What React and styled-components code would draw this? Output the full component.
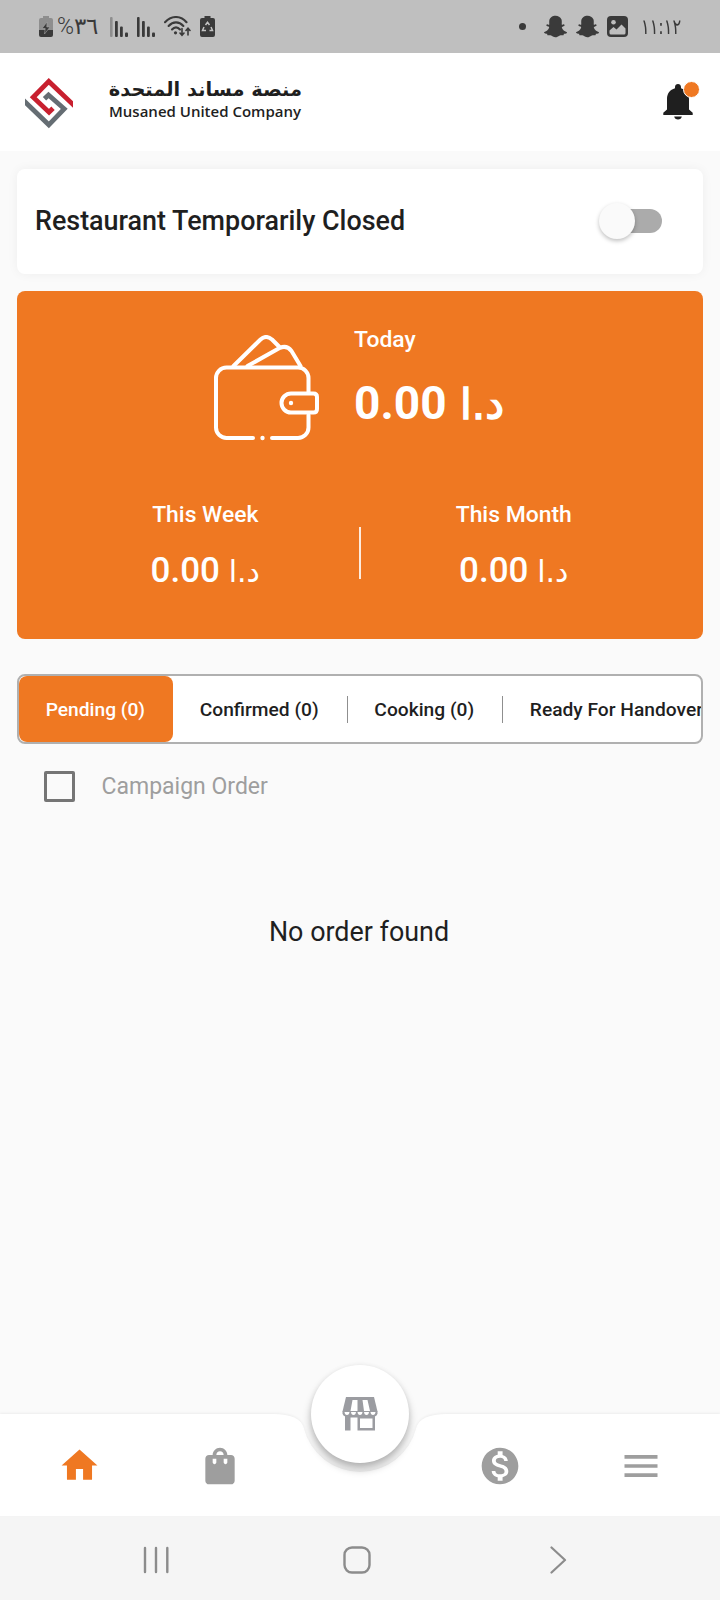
import React from 'react'
import styled, { createGlobalStyle } from 'styled-components'
import { MdHome, MdShoppingBag, MdMonetizationOn, MdMenu } from 'react-icons/md'
import { FaSnapchatGhost } from 'react-icons/fa'

const tabs = [
    { id: 1, label: 'Pending (0)', active: true },
    { id: 2, label: 'Confirmed (0)' },
    { id: 3, label: 'Cooking (0)', divider: true },
    { id: 4, label: 'Ready For Handover', divider: true },
]

const BatteryCharging = () => (
    <svg width="14" height="21" viewBox="0 0 14 21">
        <path d="M4 0h6v2h2a2 2 0 0 1 2 2v10H0V4a2 2 0 0 1 2-2h2z" fill="#8e8e8e" />
        <path d="M0 14h14v5a2 2 0 0 1-2 2H2a2 2 0 0 1-2-2z" fill="#3a3a3a" />
        <path d="M8 6L3 12.5h3.2L5.5 18l5.5-7H7.8z" fill="#3a3a3a" stroke="#a5a5a5" strokeWidth=".6" />
    </svg>
)

const Signal = ({ faded }) => (
    <svg width="18" height="20" viewBox="0 0 18 20" fill="#3a3a3a">
        <rect x="0" y="0" width="2.6" height="20" rx="1" fill={faded ? '#8e8e8e' : '#3a3a3a'} />
        <rect x="5" y="4" width="2.8" height="16" rx="1" />
        <rect x="10" y="9.5" width="2.8" height="10.5" rx="1" />
        <rect x="15" y="15.5" width="3" height="4.5" rx="1" />
    </svg>
)

const Wifi = () => (
    <svg width="27" height="21" viewBox="0 0 27 21" fill="none" stroke="#3a3a3a" strokeWidth="2.1" strokeLinecap="round">
        <path d="M1 6.2C7.5-.7 16.5-.7 22.5 6.2" />
        <path d="M4.6 10C9 5.2 15 5.2 19.4 10" />
        <path d="M8 13.5C10.5 10.6 13.5 10.6 16 13.5" />
        <circle cx="11.5" cy="16.8" r="1.6" fill="#3a3a3a" stroke="none" />
        <path d="M18 12.5v6.500M16 17l2 2.300 2-2.300M24 19v-6.500M22 14.500l2-2.300 2 2.300" strokeWidth="1.6" />
    </svg>
)

const BatteryRecycle = () => (
    <svg width="15" height="21" viewBox="0 0 15 21">
        <path d="M4.5 0h6v2H13a2 2 0 0 1 2 2v15a2 2 0 0 1-2 2H2a2 2 0 0 1-2-2V4a2 2 0 0 1 2-2h2.5z" fill="#3a3a3a" />
        <path d="M5.5 9l2-2.8 2 2.8M11 11l1.5 3.5h-3M6 14.5H2.5L4 11" fill="none" stroke="#c4c4c4" strokeWidth="1.5" />
    </svg>
)

const Picture = () => (
    <svg width="21" height="21" viewBox="0 0 21 21">
        <rect width="21" height="21" rx="4" fill="#3a3a3a" />
        <circle cx="6.5" cy="6.3" r="2.3" fill="#bfbfbf" />
        <path d="M2.5 14.5l4-3.5 3 2.5 5-5 4 4V17a1.5 1.5 0 0 1-1.5 1.5H4A1.5 1.5 0 0 1 2.5 17z" fill="#bfbfbf" />
    </svg>
)

const Logo = () => (
    <svg width="48" height="51" viewBox="0 0 48 51" fill="none" strokeWidth="4.8">
        <path d="M52 30.3L23.8 3.4 8.2 19.2 24 34.2 28 30.2" stroke="#c8202f" />
        <path d="M-4 20L23.8 46.8 39.2 30.8 23.5 17 19.5 20.8" stroke="#656d73" />
    </svg>
)

const Bell = () => (
    <svg width="30" height="36" viewBox="0 0 30 36" fill="#1f1f1f">
        <path d="M15 0c1.700 0 3 1.300 3 3v1.300C23 5.700 26 9.500 26 15v10.500l3.700 3.300V31H.3v-2.200L4 25.500V15C4 9.500 7 5.700 12 4.300V3c0-1.700 1.300-3 3-3z" />
        <path d="M11.200 32.500h7.600c-.3 1.900-1.800 3-3.800 3s-3.500-1.100-3.800-3z" />
    </svg>
)

const Wallet = () => (
    <svg width="106" height="106" viewBox="0 0 106 106" fill="none" stroke="#fff" strokeWidth="4" strokeLinecap="round" strokeLinejoin="round">
        <path d="M39 103H12.500A10.500 10.500 0 0 1 2 92.500V43A10.500 10.500 0 0 1 12.500 32.500H84a10.500 10.500 0 0 1 10.500 10.500V58M94.500 80V92.500A10.500 10.500 0 0 1 84 103H58" />
        <path d="M19.500 31L46.500 4.500Q52-.5 58 4.500L65.500 12" />
        <path d="M33.500 31L66 12.800Q73 10 77.500 16L86.500 31" />
        <path d="M77 58.500h22.500q3.500 0 3.500 3.500v12q0 3.500-3.500 3.500H77a9.500 9.500 0 0 1 0-19z" />
        <circle cx="77" cy="68" r="2.2" fill="#fff" stroke="none" />
        <circle cx="48.5" cy="103" r="2.2" fill="#fff" stroke="none" />
    </svg>
)

const Store = () => (
    <svg width="36" height="34" viewBox="0 0 36 34" fill="#9b9ca1">
        <path d="M4 0h28l3.500 14.500H.5z" />
        <path d="M10.500 3h5v11h-7zM20.500 3h5l2.500 11h-6z" fill="#fff" />
        <path d="M.5 14h35v2.500c-.5 2-1.700 3-3.500 3H4c-1.800 0-3-1-3.500-3z" />
        <path d="M2.500 15h5q-.3 3-2.500 3t-2.500-3zM9 15h5q-.3 3-2.500 3T9 15zM15.500 15h5q-.3 3-2.500 3t-2.500-3zM22 15h5q-.3 3-2.500 3T22 15zM28.500 15h5q-.3 3-2.500 3t-2.500-3z" fill="#fff" />
        <path d="M3 18h5.500v15.500H3zM3 18h30v2.500H3z" />
        <path d="M15.500 19H33v14.500H15.500zM18 21.500v9.500h12.500v-9.500z" fillRule="evenodd" />
    </svg>
)

const App = () => {
    return (
        <>
            <GlobalStyle />
            <Screen>
                <StatusBar>
                    <StatusGroup>
                        <BatteryCharging />
                        <Percent>%٣٦</Percent>
                        <Signal faded />
                        <Signal />
                        <Wifi />
                        <BatteryRecycle />
                    </StatusGroup>
                    <StatusGroup $end>
                        <MoreDot />
                        <FaSnapchatGhost size={23} />
                        <FaSnapchatGhost size={23} />
                        <Picture />
                        <Clock>١١:١٢</Clock>
                    </StatusGroup>
                </StatusBar>

                <Header>
                    <Logo />
                    <Brand>
                        <ArabicName lang="ar" dir="rtl">منصة مساند المتحدة</ArabicName>
                        <LatinName>Musaned United Company</LatinName>
                    </Brand>
                    <BellButton aria-label="Notifications">
                        <Bell />
                        <BellBadge />
                    </BellButton>
                </Header>

                <Content>
                    <ClosedCard>
                        <CardTitle>Restaurant Temporarily Closed</CardTitle>
                        <Switch role="switch" aria-checked="false">
                            <Thumb />
                        </Switch>
                    </ClosedCard>

                    <Earnings>
                        <TodayRow>
                            <Wallet />
                            <div>
                                <EarningLabel>Today</EarningLabel>
                                <Amount $big>0.00 <Currency $big>د.ا</Currency></Amount>
                            </div>
                        </TodayRow>
                        <PeriodRow>
                            <Period>
                                <EarningLabel>This Week</EarningLabel>
                                <Amount>0.00 <Currency>د.ا</Currency></Amount>
                            </Period>
                            <PeriodDivider />
                            <Period>
                                <EarningLabel>This Month</EarningLabel>
                                <Amount>0.00 <Currency>د.ا</Currency></Amount>
                            </Period>
                        </PeriodRow>
                    </Earnings>

                    <Tabs>
                        {
                            tabs.map((tab) => (
                                <React.Fragment key={tab.id}>
                                    {tab.divider && <TabDivider />}
                                    <Tab $active={tab.active}>{tab.label}</Tab>
                                </React.Fragment>
                            ))
                        }
                    </Tabs>

                    <Campaign>
                        <Checkbox />
                        Campaign Order
                    </Campaign>
                    <Empty>No order found</Empty>
                </Content>

                <BottomBar>
                    <BarShape width="720" height="102" viewBox="0 0 720 102">
                        <path d="M0 0H272.7Q300.2 0 303.75 14.1A58 58 0 0 0 416.25 14.1Q419.8 0 447.3 0H720V102H0z" fill="#fff" />
                    </BarShape>
                    <BarItem $active><MdHome size={43} /></BarItem>
                    <BarItem><MdShoppingBag size={44} /></BarItem>
                    <BarItem><StoreButton><Store /></StoreButton></BarItem>
                    <BarItem><MdMonetizationOn size={44} /></BarItem>
                    <BarItem><MdMenu size={44} /></BarItem>
                </BottomBar>

                <SystemNav>
                    <svg width="28" height="28" viewBox="0 0 28 28" fill="none" stroke="#8c8c8c" strokeWidth="2.4" strokeLinecap="round">
                        <path d="M3 2v24M14 2v24M25.3 2v24" />
                    </svg>
                    <svg width="28" height="28" viewBox="0 0 28 28" fill="none" stroke="#8c8c8c" strokeWidth="2.4">
                        <rect x="1.5" y="1.5" width="25" height="25" rx="7.5" />
                    </svg>
                    <svg width="28" height="28" viewBox="0 0 28 28" fill="none" stroke="#8c8c8c" strokeWidth="2.2" strokeLinecap="round" strokeLinejoin="round">
                        <path d="M7.500 1.500L21 14 7.500 26.500" />
                    </svg>
                </SystemNav>
            </Screen>
        </>
    )
}

const GlobalStyle = createGlobalStyle`
    *{
        box-sizing: border-box;
    }
    body{
        margin: 0;
        background: #fafafa;
        font-family: Roboto, 'DejaVu Sans', sans-serif;
        color: #1f1f1f;
    }
    button{
        border: 0;
        padding: 0;
        background: none;
        font: inherit;
        color: inherit;
    }
    svg{
        display: block;
        flex-shrink: 0;
    }
`

const Screen = styled.div`
    width: 720px;
    height: 1600px;
    display: flex;
    flex-direction: column;
    overflow: hidden;
    background: #fafafa;
`

const StatusBar = styled.div`
    height: 53px;
    padding: 0 40.5px 0 39px;
    display: flex;
    align-items: center;
    justify-content: space-between;
    background: #bfbfbf;
    color: #3a3a3a;
`

const StatusGroup = styled.div`
    display: flex;
    align-items: center;
    gap: ${({ $end }) => ($end ? '8.5px' : '9px')};
`

const Percent = styled.span`
    width: 43px;
    margin: 0 1px 0 -5px;
    font-size: 23px;
    font-weight: 300;
    direction: ltr;
    unicode-bidi: bidi-override;
    white-space: nowrap;
`

const Clock = styled.span`
    width: 39px;
    margin-left: 4px;
    font-family: 'DejaVu Sans', sans-serif;
    font-size: 21px;
    letter-spacing: -2px;
    white-space: nowrap;
    transform: scaleX(.77);
    transform-origin: left;
`

const MoreDot = styled.span`
    width: 7px;
    height: 7px;
    margin-right: 10px;
    border-radius: 50%;
    background: #3a3a3a;
`

const Header = styled.header`
    height: 98px;
    padding: 3px 27px 0 25px;
    display: flex;
    align-items: center;
    background: #fff;
`

const Brand = styled.div`
    margin: -8px 0 0 36px;
    flex: 1;
`

const ArabicName = styled.div`
    width: 193px;
    height: 23px;
    font: bold 19.4px/24px 'DejaVu Sans', sans-serif;
    white-space: nowrap;
`

const LatinName = styled.div`
    font: 600 15px/20px 'Open Sans', sans-serif;
    white-space: nowrap;
`

const BellButton = styled.button`
    position: relative;
    margin-top: -3px;
`

const BellBadge = styled.span`
    position: absolute;
    top: -3px;
    right: -7px;
    width: 17px;
    height: 17px;
    border: 1.5px solid #fff;
    border-radius: 50%;
    background: #ef7822;
`

const Content = styled.main`
    flex: 1;
    padding: 18px 17px 0;
`

const ClosedCard = styled.section`
    height: 105px;
    padding: 0 41px 2px 18px;
    display: flex;
    align-items: center;
    justify-content: space-between;
    border-radius: 8px;
    background: #fff;
    box-shadow: 0 0 11px rgba(0, 0, 0, .05);
`

const CardTitle = styled.h1`
    margin: 0;
    font-size: 26.9px;
    font-weight: 500;
`

const Switch = styled.button`
    width: 56px;
    height: 24px;
    display: flex;
    align-items: center;
    border-radius: 12px;
    background: #ababab;
`

const Thumb = styled.span`
    width: 36px;
    height: 36px;
    margin-left: -7px;
    flex-shrink: 0;
    border-radius: 50%;
    background: #fafafa;
    box-shadow: 0 2px 4px rgba(0, 0, 0, .25);
`

const Earnings = styled.section`
    height: 348px;
    margin-top: 17px;
    padding-top: 35px;
    border-radius: 8px;
    background: #ef7822;
    color: #fff;
`

const TodayRow = styled.div`
    height: 164px;
    padding: 9px 0 0 197px;
    display: flex;
    align-items: flex-start;
    gap: 34px;

    > div{
        margin-top: -9px;
    }
`

const EarningLabel = styled.div`
    font-size: 22.9px;
    font-weight: 500;
    line-height: 28px;
`

const Amount = styled.div`
    margin-top: ${({ $big }) => ($big ? '19px' : '22px')};
    font-size: ${({ $big }) => ($big ? '46px' : '35px')};
    font-weight: ${({ $big }) => ($big ? 700 : 500)};
    line-height: ${({ $big }) => ($big ? '60px' : '40px')};
    white-space: nowrap;
`

const Currency = styled.span`
    margin-left: ${({ $big }) => ($big ? '2px' : '0')};
    font-family: 'DejaVu Sans', sans-serif;
    font-size: ${({ $big }) => ($big ? '42.5px' : '30px')};
    font-weight: 400;
    line-height: 1;
    -webkit-text-stroke: ${({ $big }) => ($big ? '1.4px' : '0')} #fff;
`

const PeriodRow = styled.div`
    padding: 11px 36px 0 35px;
    display: flex;
    justify-content: space-between;
`

const Period = styled.div`
    width: 307px;
    text-align: center;
`

const PeriodDivider = styled.div`
    width: 2px;
    height: 52px;
    margin-top: 26px;
    background: rgba(255, 255, 255, .85);
`

const Tabs = styled.nav`
    height: 70px;
    margin-top: 35px;
    display: flex;
    align-items: center;
    overflow: hidden;
    border: 2px solid #b0b0b0;
    border-radius: 8px;
    background: #fff;
`

const Tab = styled.button`
    height: 66px;
    padding: 0 28px 0 26.7px;
    flex-shrink: 0;
    border-radius: 8px;
    background: ${({ $active }) => ($active ? '#ef7822' : 'transparent')};
    color: ${({ $active }) => ($active ? '#fff' : '#1f1f1f')};
    font-size: 19.2px;
    font-weight: 500;
    white-space: nowrap;
`

const TabDivider = styled.span`
    width: 1px;
    height: 27px;
    flex-shrink: 0;
    background: #8f8f8f;
`

const Campaign = styled.label`
    height: 85px;
    padding-left: 27px;
    display: flex;
    align-items: center;
    gap: 26.5px;
    color: #9e9e9e;
    font-size: 23px;
`

const Checkbox = styled.span`
    width: 31px;
    height: 31px;
    border: 3px solid #757575;
    border-radius: 2px;
`

const Empty = styled.p`
    margin: 87px 2px 0 0;
    font-size: 26.9px;
    line-height: 32px;
    text-align: center;
`

const BottomBar = styled.nav`
    position: relative;
    height: 102px;
    padding: 0 9px;
    display: grid;
    grid-template-columns: repeat(5, 1fr);
`

const BarShape = styled.svg`
    position: absolute;
    inset: 0;
    overflow: visible;
    filter: drop-shadow(0 -1px 1px rgba(0, 0, 0, .05));
`

const BarItem = styled.div`
    position: relative;
    padding-top: 1px;
    display: flex;
    align-items: center;
    justify-content: center;
    color: ${({ $active }) => ($active ? '#ef7822' : '#9e9e9e')};
`

const StoreButton = styled.button`
    position: absolute;
    top: -49px;
    width: 98px;
    height: 98px;
    display: flex;
    align-items: center;
    justify-content: center;
    border-radius: 50%;
    background: #fff;
    box-shadow: 0 6px 8px rgba(0, 0, 0, .27), 0 0 5px rgba(0, 0, 0, .06);
`

const SystemNav = styled.div`
    height: 84px;
    padding: 3px 148px 0 142px;
    display: flex;
    align-items: center;
    justify-content: space-between;
    background: #f5f5f5;
`

export default App
